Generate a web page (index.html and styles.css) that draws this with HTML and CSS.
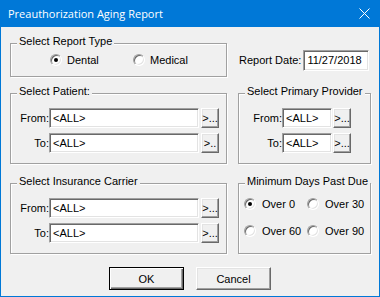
FILE: index.html
```html
<!DOCTYPE html>
<html>
<head>
<meta charset="utf-8">
<title>Preauthorization Aging Report</title>
<link rel="stylesheet" href="styles.css">
</head>
<body>
<div class="titlebar">
  <span class="title">Preauthorization Aging Report</span>
  <svg class="close" width="11" height="11" viewBox="0 0 11 11"><path d="M0.5 0.5L10.5 10.5M10.5 0.5L0.5 10.5" stroke="#fff" stroke-width="1" fill="none"/></svg>
</div>
<div class="frame">
  <div class="row r1">
    <div class="group g-left g-type">
      <span class="legend">Select Report Type</span>
      <div class="type-radios">
        <span class="radio r-dental"><span class="rb on"></span>Dental</span>
        <span class="radio"><span class="rb"></span>Medical</span>
      </div>
    </div>
    <div class="date"><span class="date-label">Report Date:</span><span class="field date-field">11/27/2018</span></div>
  </div>

  <div class="row r2">
    <div class="group g-left g-pick">
      <span class="legend">Select Patient:</span>
      <div class="frow"><span class="flabel">From:</span><span class="field wide">&lt;ALL&gt;</span><span class="mini">&gt;...</span></div>
      <div class="frow"><span class="flabel">To:</span><span class="field wide">&lt;ALL&gt;</span><span class="mini">&gt;..</span></div>
    </div>
    <div class="group g-right g-prov">
      <span class="legend">Select Primary Provider</span>
      <div class="frow"><span class="flabel">From:</span><span class="field narrow">&lt;ALL&gt;</span><span class="mini">&gt;...</span></div>
      <div class="frow"><span class="flabel">To:</span><span class="field narrow">&lt;ALL&gt;</span><span class="mini">&gt;...</span></div>
    </div>
  </div>

  <div class="row r3">
    <div class="group g-left g-pick">
      <span class="legend">Select Insurance Carrier</span>
      <div class="frow"><span class="flabel">From:</span><span class="field wide">&lt;ALL&gt;</span><span class="mini">&gt;...</span></div>
      <div class="frow"><span class="flabel">To:</span><span class="field wide">&lt;ALL&gt;</span><span class="mini">&gt;...</span></div>
    </div>
    <div class="group g-right g-days">
      <span class="legend">Minimum Days Past Due</span>
      <div class="days">
        <span class="radio"><span class="rb on"></span>Over 0</span>
        <span class="radio"><span class="rb"></span>Over 30</span>
        <span class="radio"><span class="rb"></span>Over 60</span>
        <span class="radio"><span class="rb"></span>Over 90</span>
      </div>
    </div>
  </div>

  <div class="buttons">
    <span class="btn default">OK</span>
    <span class="btn">Cancel</span>
  </div>
</div>
</body>
</html>
```

FILE: styles.css
```css
* { box-sizing: border-box; }

html { height: 297px; overflow: hidden; }

body {
  margin: 0;
  width: 380px;
  height: 297px;
  overflow: hidden;
  background: #f0f0f0;
  font-family: "Liberation Sans", Arial, sans-serif;
  font-size: 11px;
  color: #000;
}

.titlebar {
  height: 27px;
  background: #0078d7;
  color: #fff;
  display: flex;
  align-items: center;
  padding: 0 10px 0 8px;
  font-family: "Open Sans", "Noto Sans", sans-serif;
  font-size: 11px;
}

.close { margin-left: auto; }

.frame {
  height: 270px;
  border: 1px solid #0078d7;
  border-top: none;
  padding-left: 9px;
  overflow: hidden;
}

.row { display: flex; }
.r1 { margin-top: 16px; align-items: center; height: 34px; }
.r2 { margin-top: 16px; }
.r3 { margin-top: 19px; }

.group {
  position: relative;
  border: 1px solid #a0a0a0;
  box-shadow: 1px 1px 0 #fff, inset 1px 1px 0 #fff;
}

.legend {
  position: absolute;
  top: -9px;
  left: 6px;
  padding: 0 2px;
  background: #f0f0f0;
  line-height: 13px;
  white-space: nowrap;
}

.g-left { width: 217px; }
.g-type { height: 34px; }
.g-right { width: 133px; margin-left: 11px; }
.g-pick, .g-prov, .g-days { height: 71px; }
.g-pick, .g-prov { padding-top: 14px; }

.type-radios {
  display: flex;
  align-items: center;
  height: 100%;
  padding-left: 39px;
}

.radio { display: flex; align-items: center; white-space: nowrap; }
.r-dental { width: 83px; }

.rb {
  position: relative;
  flex: none;
  width: 12px;
  height: 12px;
  border-radius: 50%;
  border: 1px solid;
  border-color: #a0a0a0 #fff #fff #a0a0a0;
  box-shadow: inset 1px 1px 0 #696969, inset -1px -1px 0 #e3e3e3;
  background: #fff;
  margin-right: 5px;
}
.rb.on::after {
  content: "";
  position: absolute;
  left: 3px;
  top: 3px;
  width: 4px;
  height: 4px;
  border-radius: 50%;
  background: #000;
}

.date { display: flex; align-items: center; margin-left: 12px; }

.field {
  display: flex;
  align-items: center;
  height: 20px;
  background: #fff;
  border: 1px solid;
  border-color: #a0a0a0 #fff #fff #a0a0a0;
  box-shadow: inset 1px 1px 0 #696969, inset -1px -1px 0 #e3e3e3;
  padding-left: 3px;
  white-space: nowrap;
  overflow: hidden;
}
.date-field { width: 66px; height: 21px; margin-left: 2px; }
.wide { width: 150px; }
.narrow { width: 50px; }

.frow { display: flex; align-items: center; height: 20px; }
.frow + .frow { margin-top: 5px; }
.flabel { text-align: right; white-space: nowrap; }
.g-pick .flabel { width: 38px; }
.g-prov .flabel { width: 43px; }

.mini, .btn {
  display: flex;
  align-items: center;
  justify-content: center;
  background: #f0f0f0;
  border: 1px solid;
  border-color: #fff #696969 #696969 #fff;
  box-shadow: inset -1px -1px 0 #a0a0a0, inset 1px 1px 0 #e3e3e3;
  white-space: nowrap;
  overflow: hidden;
}
.mini { width: 18px; height: 20px; margin-left: 2px; }
.g-prov .mini { margin-left: 1px; }

.days {
  display: grid;
  grid-template-columns: 63px auto;
  row-gap: 14px;
  padding: 13px 0 0 5px;
}
.days .radio { height: 13px; }
.days .rb { margin-right: 6px; }

.buttons {
  display: flex;
  justify-content: center;
  gap: 12px;
  margin: 13px 0 0 -9px;
}
.btn { width: 75px; height: 23px; }
.btn.default {
  border-color: #000;
  box-shadow: inset 1px 1px 0 #fff, inset -1px -1px 0 #696969, inset -2px -2px 0 #a0a0a0;
}
```
